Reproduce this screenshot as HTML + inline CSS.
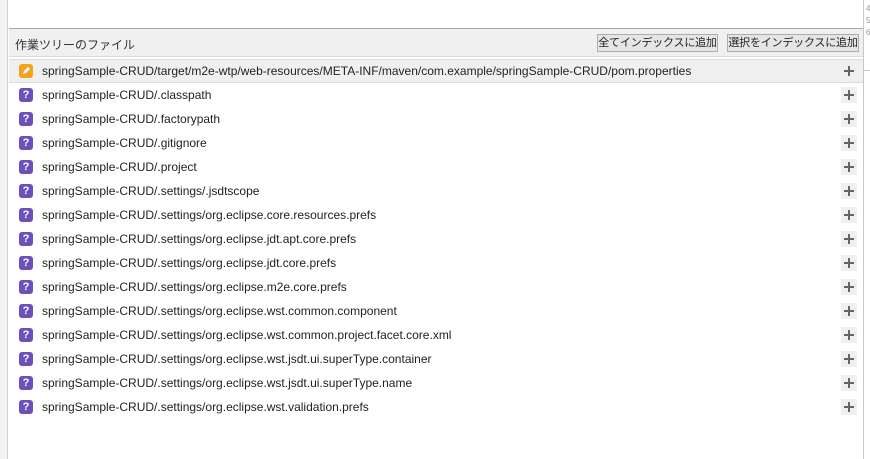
<!DOCTYPE html>
<html><head><meta charset="utf-8"><style>
*{margin:0;padding:0;box-sizing:border-box}
body{width:870px;height:459px;background:#fff;position:relative;overflow:hidden;font-family:"Liberation Sans","Noto Sans CJK JP",sans-serif;font-size:12px;color:#222}
.lstrip{position:absolute;left:0;top:0;width:8px;height:459px;background:#f3f3f3;border-right:1px solid #d0d0d0}
.rline{position:absolute;left:863px;top:0;width:1px;height:459px;background:#c8c8c8}
.topline{position:absolute;left:9px;top:28px;width:854px;height:1px;background:#a8a8a8}
.hdr{position:absolute;left:9px;top:29px;width:854px;height:28px;background:#f0f0f0;border-bottom:1px solid #dcdcdc}
.hdr .t{position:absolute;left:6px;top:7px;font-size:12px;color:#333}
.btn{position:absolute;top:5px;height:18px;border:1px solid #adadad;background:#e5e5e5;font-size:11px;line-height:1;color:#222;white-space:nowrap;display:flex;align-items:center;justify-content:center;overflow:hidden;letter-spacing:-0.2px;padding-top:1px}
.row{position:absolute;left:9px;width:854px;height:24px}
.row.sel{background:#f0f0f0;border-top:1px solid #dcdcdc;border-bottom:1px solid #dcdcdc}
.ic{position:absolute;left:10px;top:5px;width:14px;height:14px;border-radius:3px;color:#fff;font-weight:bold;font-size:11px;text-align:center;line-height:14px}
.q{background:#6b4fbb}
.e{background:#f5a21c}
.tx{position:absolute;left:33px;top:5px;white-space:nowrap;color:#222}
.pl{position:absolute;left:832px;top:4px;width:16px;height:16px;background:#f0f0f0}
.pl:before{content:"";position:absolute;left:3px;top:7px;width:10px;height:2px;background:#666}
.pl:after{content:"";position:absolute;left:7px;top:3px;width:2px;height:10px;background:#666}
.n{position:absolute;left:866px;font-size:8px;color:#999}
</style></head><body>
<div class="lstrip"></div>
<div class="rline"></div>
<div class="n" style="top:4px">4</div><div class="n" style="top:16px">5</div><div class="n" style="top:28px">6</div>
<div style="position:absolute;left:864px;top:70px;width:6px;height:1px;background:#ccc"></div>
<div class="topline"></div>
<div class="hdr"><div class="t">作業ツリーのファイル</div>
<div class="btn" style="left:588px;width:121px">全てインデックスに追加</div>
<div class="btn" style="left:718px;width:132px">選択をインデックスに追加</div></div>
<div class="row sel" style="top:59px"><div class="ic e" style="top:4px"><svg width="14" height="14" viewBox="0 0 14 14"><path d="M4 10l1-3 4-4 2 2-4 4z" fill="#fff"/></svg></div><div class="tx" style="top:4px">springSample-CRUD/target/m2e-wtp/web-resources/META-INF/maven/com.example/springSample-CRUD/pom.properties</div><div class="pl" style="top:3px"></div></div>
<div class="row" style="top:83px"><div class="ic q">?</div><div class="tx">springSample-CRUD/.classpath</div><div class="pl"></div></div>
<div class="row" style="top:107px"><div class="ic q">?</div><div class="tx">springSample-CRUD/.factorypath</div><div class="pl"></div></div>
<div class="row" style="top:131px"><div class="ic q">?</div><div class="tx">springSample-CRUD/.gitignore</div><div class="pl"></div></div>
<div class="row" style="top:155px"><div class="ic q">?</div><div class="tx">springSample-CRUD/.project</div><div class="pl"></div></div>
<div class="row" style="top:179px"><div class="ic q">?</div><div class="tx">springSample-CRUD/.settings/.jsdtscope</div><div class="pl"></div></div>
<div class="row" style="top:203px"><div class="ic q">?</div><div class="tx">springSample-CRUD/.settings/org.eclipse.core.resources.prefs</div><div class="pl"></div></div>
<div class="row" style="top:227px"><div class="ic q">?</div><div class="tx">springSample-CRUD/.settings/org.eclipse.jdt.apt.core.prefs</div><div class="pl"></div></div>
<div class="row" style="top:251px"><div class="ic q">?</div><div class="tx">springSample-CRUD/.settings/org.eclipse.jdt.core.prefs</div><div class="pl"></div></div>
<div class="row" style="top:275px"><div class="ic q">?</div><div class="tx">springSample-CRUD/.settings/org.eclipse.m2e.core.prefs</div><div class="pl"></div></div>
<div class="row" style="top:299px"><div class="ic q">?</div><div class="tx">springSample-CRUD/.settings/org.eclipse.wst.common.component</div><div class="pl"></div></div>
<div class="row" style="top:323px"><div class="ic q">?</div><div class="tx">springSample-CRUD/.settings/org.eclipse.wst.common.project.facet.core.xml</div><div class="pl"></div></div>
<div class="row" style="top:347px"><div class="ic q">?</div><div class="tx">springSample-CRUD/.settings/org.eclipse.wst.jsdt.ui.superType.container</div><div class="pl"></div></div>
<div class="row" style="top:371px"><div class="ic q">?</div><div class="tx">springSample-CRUD/.settings/org.eclipse.wst.jsdt.ui.superType.name</div><div class="pl"></div></div>
<div class="row" style="top:395px"><div class="ic q">?</div><div class="tx">springSample-CRUD/.settings/org.eclipse.wst.validation.prefs</div><div class="pl"></div></div>
</body></html>
